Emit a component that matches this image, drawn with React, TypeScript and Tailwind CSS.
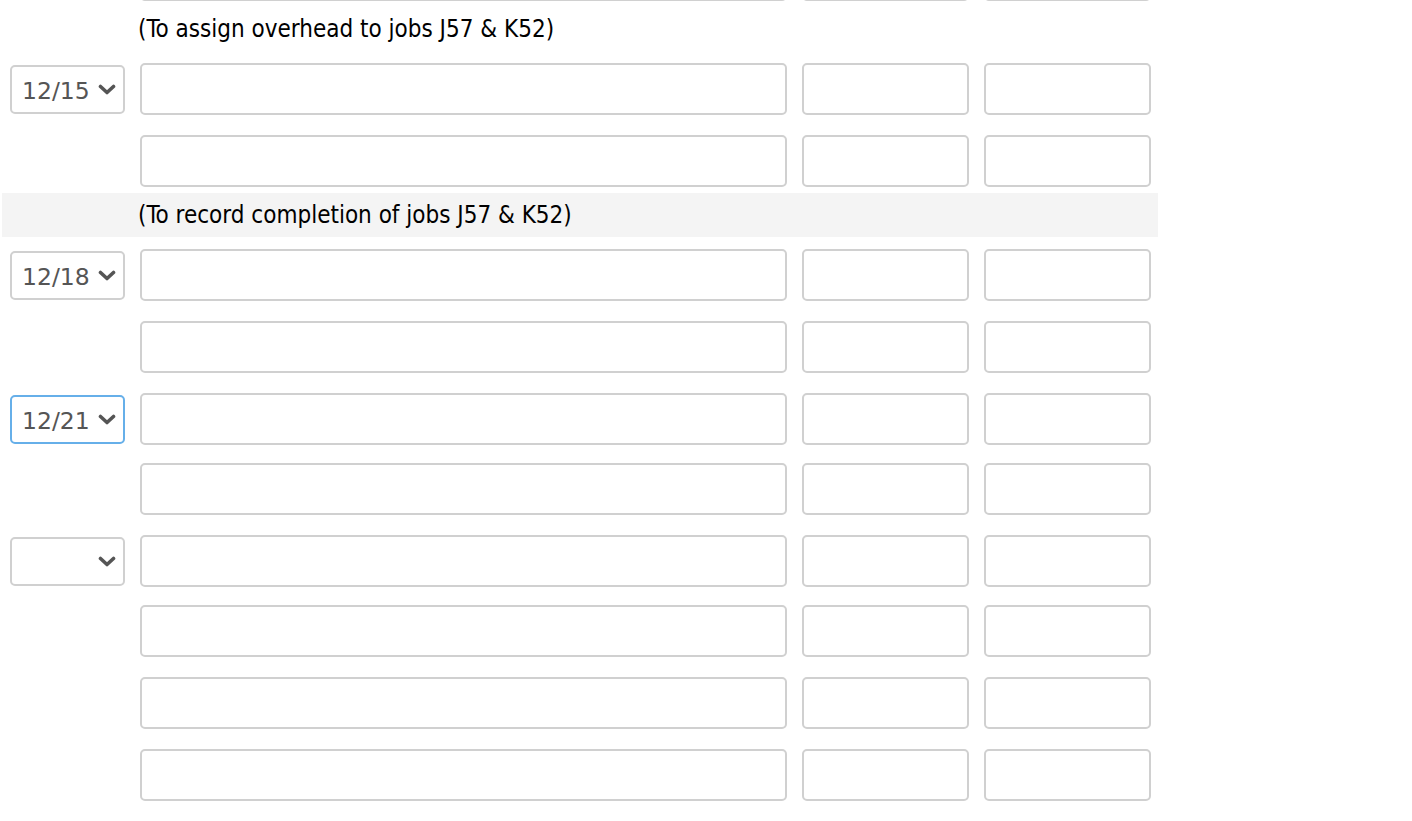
import React from 'react';

type Row = { date?: string; focus?: boolean; mt: string };

const Chevron = () => (
  <svg width="18" height="11" viewBox="0 0 18 11" className="shrink-0">
    <path d="M2.5 2.5 L9 8.5 L15.5 2.5" fill="none" stroke="#555" strokeWidth="3.6" strokeLinecap="round" strokeLinejoin="round" />
  </svg>
);

const DateSelect = ({ value, focus }: { value: string; focus?: boolean }) => (
  <div
    className={`ml-[8px] flex h-[49px] w-[115px] items-center justify-between rounded-[5px] border-2 bg-white pl-[10px] pr-[7px] text-[23.5px] text-[#555] ${
      focus ? 'border-[#66afe9]' : 'border-[#d0d0d0]'
    }`}
    style={{ fontFamily: '"DejaVu Sans", Verdana, sans-serif' }}
  >
    <span className="mt-[5px]">{value}</span>
    <Chevron />
  </div>
);

const Field = ({ w }: { w: string }) => (
  <input
    type="text"
    className={`h-[52px] ${w} shrink-0 rounded-[5px] border-2 border-[#d0d0d0] bg-white outline-none`}
  />
);

const EntryRow = ({ row }: { row: Row }) => (
  <div className={`flex h-[52px] items-center ${row.mt}`}>
    <div className="flex w-[138px] shrink-0 items-center">
      {row.date !== undefined && <DateSelect value={row.date} focus={row.focus} />}
    </div>
    <Field w="w-[647px]" />
    <div className="w-[15px] shrink-0" />
    <Field w="w-[167px]" />
    <div className="w-[15px] shrink-0" />
    <Field w="w-[167px]" />
  </div>
);

const Note = ({ text, shaded, mt }: { text: string; shaded?: boolean; mt: string }) => (
  <div
    className={`flex h-[44px] items-center pl-[136px] text-[24px] text-black ${mt} ${shaded ? 'bg-[#f4f4f4]' : ''}`}
    style={{ fontFamily: '"DejaVu Sans Condensed", Tahoma, "DejaVu Sans", sans-serif' }}
  >
    {text}
  </div>
);

export default function App() {
  return (
    <div className="min-h-screen overflow-hidden bg-white">
      <div className="ml-[2px] w-[1156px]">
        <EntryRow row={{ mt: '-mt-[51px]' }} />
        <Note text="(To assign overhead to jobs J57 & K52)" mt="mt-[6px]" />
        <EntryRow row={{ date: '12/15', mt: 'mt-[12px]' }} />
        <EntryRow row={{ mt: 'mt-[20px]' }} />
        <Note text="(To record completion of jobs J57 & K52)" shaded mt="mt-[6px]" />
        <EntryRow row={{ date: '12/18', mt: 'mt-[12px]' }} />
        <EntryRow row={{ mt: 'mt-[20px]' }} />
        <EntryRow row={{ date: '12/21', focus: true, mt: 'mt-[20px]' }} />
        <EntryRow row={{ mt: 'mt-[18px]' }} />
        <EntryRow row={{ date: '', mt: 'mt-[20px]' }} />
        <EntryRow row={{ mt: 'mt-[18px]' }} />
        <EntryRow row={{ mt: 'mt-[20px]' }} />
        <EntryRow row={{ mt: 'mt-[20px]' }} />
      </div>
    </div>
  );
}
